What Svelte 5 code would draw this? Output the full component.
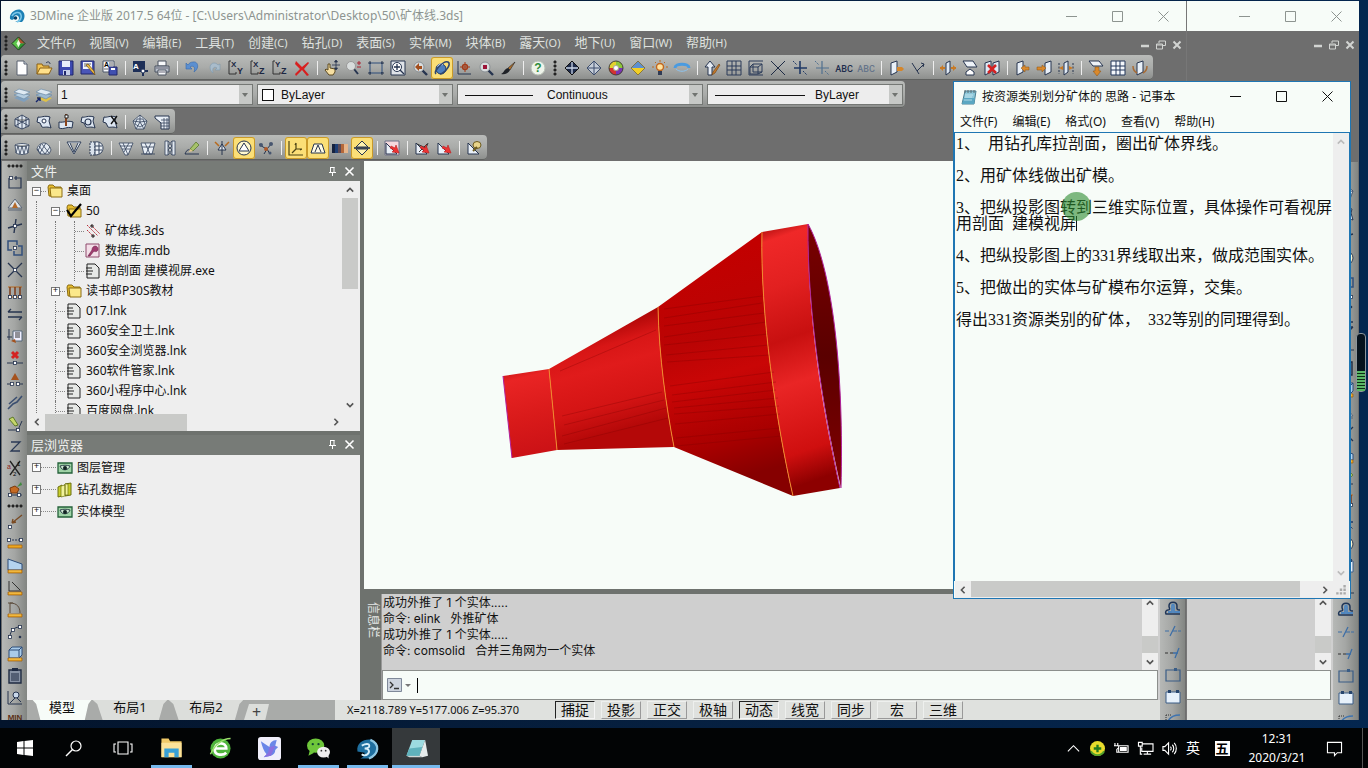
<script lang="ts">
  type Tool = { icon: string; label: string; on?: boolean };

  const N = "#26344f";
  const cloth = `<path d="M2 3c3 1 6-2 12 0l-1 4 2 7c-4-2-8 0-9-1L4 9 1 8z" fill="#dde6f1" stroke="${N}"/>`;
  const lens = `<path d="M10 10l5 5" stroke="${N}" stroke-width="2.4"/><circle cx="7" cy="7" r="5" fill="#d8dcdd" stroke="#8a9095"/>`;
  const tri = `<path d="M2 3v11h11z" fill="#e9f0f8" stroke="${N}"/>`;
  const arrow = `<path d="M7 6l4 2 1-3 3 8-7-1 2-2-4-2z" fill="#e33" stroke="#b22" stroke-width=".6"/>`;
  const ruler = `<path d="M1 12h14v3H1z" fill="#eca61f" stroke="#9b5d10" stroke-width=".7"/><path d="M3 12v2m2-2v2m2-2v2m2-2v2m2-2v2m2-2v2" stroke="#fbe08a" stroke-width=".6"/>`;
  const pane = `<path d="M3 3l6-2v11l-6 3z" fill="#e9f0f8" stroke="${N}"/>`;
  const dot = (x: number, y: number) => `<rect x="${x - 1.5}" y="${y - 1.5}" width="3" height="3" fill="#fff" stroke="${N}" stroke-width=".8"/>`;
  const xyz = (a: string, b: string) => `<path d="M1 1v13h7M1 1h2M8 14v-2" fill="none" stroke="#333"/><text x="3" y="7" font-size="8" font-weight="bold" font-family="Liberation Sans" fill="#1b2743">${a}</text><text x="9" y="14" font-size="9" font-weight="bold" font-family="Liberation Sans" fill="#1b2743">${b}</text>`;
  const abc = (c: string) => `<text x="8" y="12" text-anchor="middle" font-size="9" font-weight="500" font-family="Roboto" fill="${c}">ABC</text>`;

  const icons: Record<string, string> = {
    app: `<path d="M1 11C0 5 7 0 12 2c4 2 5 8 1 12H6c4-1 5-4 3-6s-5 0-4 3l-2 1z" fill="#1d80b4"/><path d="M3 8c2-4 8-5 9-1 1 3-1 6-4 7" fill="none" stroke="#7cc8ea" stroke-width="1.6"/><circle cx="6.5" cy="10" r="1.8" fill="#0b3f66"/>`,
    gem: `<path d="M8 1L1 8l7 7z" fill="#5cc64a"/><path d="M8 1l7 7H8z" fill="#b4532f"/><path d="M8 15l7-7H8z" fill="#2f9a33"/><path d="M8 4l2 4-2 4-2-4z" fill="#eaffdc"/><path d="M8 1l7 7-7 7-7-7z" fill="none" stroke="#163b14"/>`,
    new: `<path d="M3 1h7l3 3v11H3z" fill="#fff" stroke="#59616e"/><path d="M10 1v3h3" fill="#cfd8e4" stroke="#59616e"/>`,
    open: `<path d="M1 14V4h5l1 2h6v3" fill="#f3c453" stroke="#8a6116"/><path d="M1 14l3-6h12l-3 6z" fill="#ffe08a" stroke="#8a6116"/><path d="M10 3c2-2 4-1 4 1" fill="none" stroke="#26344f"/>`,
    save: `<path d="M1 1h14v14H1z" fill="#3d49b0" stroke="#20276b"/><path d="M4 1h8v6H4z" fill="#e8edfa"/><path d="M5 10h7v5H5z" fill="#c7cfe8"/><path d="M6 11h2v4H6z" fill="#20276b"/>`,
    saveas: `<path d="M1 1h13v13H1z" fill="#4a56b8" stroke="#20276b"/><path d="M3 2h9v7H3z" fill="#f2f4fb"/><path d="M4 4h7M4 6h6" stroke="#666"/><path d="M6 5l7 8 2 2-1-4-6-7z" fill="#f1be43" stroke="#6b4c12" stroke-width=".7"/>`,
    saveall: `<path d="M1 1h11v11H1z" fill="#f5f7fb" stroke="#4d5668"/><path d="M7 7h8v8H7z" fill="#4050b0" stroke="#20276b"/><path d="M9 8h4v2H9z" fill="#fff"/><text x="2" y="7" font-size="7" font-weight="bold" font-family="Liberation Sans">A</text><path d="M7 3h4M7 5h4M2 9h4" stroke="#666"/>`,
    cad: `<path d="M1 1h12v11H1z" fill="#1d2f57"/><text x="1" y="9" font-size="8" font-weight="bold" font-family="Liberation Sans" fill="#fff">A</text><path d="M7 11h9M11 6v10" stroke="#1d2f57" stroke-width="2"/><circle cx="11" cy="11" r="2" fill="#fff" stroke="#1d2f57"/>`,
    print: `<path d="M4 1h8v5H4z" fill="#f7f9fb" stroke="#4b5360"/><path d="M1 6h14v6H1z" fill="#b9c1cc" stroke="#4b5360"/><path d="M4 10h8v5H4z" fill="#f7f9fb" stroke="#4b5360"/><path d="M5 12h6M2 8h12" stroke="#667"/>`,
    undo: `<path d="M2 3v6h6L6 7c3-2 6 0 4 5 6-4 4-11-1-10C7 2 5 3 4 5z" fill="#5b8fd0" stroke="#3568ab" stroke-width=".6"/>`,
    redo: `<path d="M14 4v6H9l2-2C8 6 6 8 7 13 2 9 4 3 8 3c2 0 3 1 4 2z" fill="#a9bccb" stroke="#7e98ad" stroke-width=".6"/>`,
    xy: xyz("X", "Y"),
    xz: xyz("X", "Z"),
    yz: xyz("Y", "Z"),
    del: `<path d="M2 1l6 6 6-5 1 1-5 6 5 6-2 1-5-6-6 6-1-2 5-5-5-5z" fill="#d81f1f"/>`,
    hand: `<path d="M5 15l-4-5 1-1 2 1V4h2v4l5 1v3l-2 3z" fill="#f6dfa2" stroke="#5c4a22"/><path d="M12 1v8M8 5h8M12 0l-1.5 2h3zM12 10l-1.5-2h3z" stroke="${N}" stroke-width=".8" fill="${N}"/>`,
    zoom: `<path d="M8 9l4 5" stroke="${N}" stroke-width="2"/><circle cx="5" cy="6" r="4.5" fill="#d8dcdc" stroke="#999"/><path d="M11 3h4M13 1v4M11 7h4" stroke="#a23"/>`,
    extents: `<path d="M2 3h12v10H2z" fill="none" stroke="#2c4d7a"/><path d="M0 3h3M2 1v3M13 3h3M14 1v3M0 13h3M2 12v3M13 13h3M14 12v3" stroke="${N}"/>`,
    zoomin: `<path d="M1 1h14v14H1z" fill="#dfe3e8" stroke="${N}"/><circle cx="7" cy="7" r="4.5" fill="#fff" stroke="${N}"/><path d="M7 4v6M4 7h6M10 10l4 4" stroke="${N}" stroke-width="1.3"/>`,
    zoomprev: lens + `<path d="M3 7l4-4v3h3v3H7v2z" fill="#a34e1d"/>`,
    orbit: `<circle cx="7" cy="9" r="5" fill="#4f7fbd" stroke="#21395f"/><path d="M4 7c1-2 3-3 5-3" stroke="#dbe9f7" stroke-width="2" fill="none"/><path d="M2 14C-1 11 10 0 14 2s-3 11-8 12" fill="none" stroke="#2f4770" stroke-width="1.6"/>`,
    target: `<path d="M2 1v13h13" fill="none" stroke="${N}"/><circle cx="9" cy="7" r="2.5" fill="none" stroke="#a43b17" stroke-width="1.4"/><path d="M9 2v10M4 7h10" stroke="#a43b17"/>`,
    zoomwin: lens + `<path d="M5 5h4v4H5z" fill="#9c1438"/>`,
    brush: `<path d="M15 2L8 8l2 2z" fill="#b6722b" stroke="#222" stroke-width=".6"/><path d="M8 8l2 2c-2 4-6 5-9 4 3-1 3-5 7-6z" fill="#1f2227"/>`,
    help: `<circle cx="8" cy="8" r="7" fill="#eef4ea" stroke="#b5beb3"/><text x="8" y="12" text-anchor="middle" font-size="12" font-weight="bold" font-family="Liberation Sans" fill="#2a8b3c">?</text>`,
    dia1: `<path d="M8 1l7 7-7 7-7-7z" fill="#1e2b4a" stroke="#111"/><path d="M8 2v12M2 8h12" stroke="#c9d5e6" stroke-width="1.3"/>`,
    dia2: `<path d="M8 1l7 7-7 7-7-7zM8 1v14M1 8h14" fill="#c5cdd8" stroke="#3c4d6c"/>`,
    wheel: `<circle cx="8" cy="8" r="5" fill="none" stroke="#e2d32c" stroke-width="4"/><path d="M8 3a5 5 0 0 1 5 5" fill="none" stroke="#8cc63a" stroke-width="4"/><path d="M13 8a5 5 0 0 1-5 5" fill="none" stroke="#7a35b4" stroke-width="4"/><path d="M8 13a5 5 0 0 1-5-5" fill="none" stroke="#d43232" stroke-width="4"/><circle cx="8" cy="8" r="2" fill="#fff"/><circle cx="8" cy="8" r="7" fill="none" stroke="#333" stroke-width=".9"/>`,
    dia3: `<path d="M8 1l7 7H1z" fill="#5d8fcf"/><path d="M1 8h14l-7 7z" fill="#f2cf26"/><path d="M8 1l7 7-7 7-7-7z" fill="none" stroke="#7c6a2c" stroke-width=".8"/>`,
    bulb: `<circle cx="8" cy="7" r="3.5" fill="#ffe3a0" stroke="#c2661d" stroke-width="1.4"/><path d="M6 11h4v4H6z" fill="#2f3b55"/><path d="M8 0v2M2 7H0M16 7h-2M3 2l1 1M13 2l-1 1" stroke="#b96a20"/>`,
    arc: `<path d="M1 8c0-5 14-5 14 0" fill="none" stroke="#4a9be0" stroke-width="3"/><path d="M2 9c3 3 9 3 12 0" fill="none" stroke="#8cc3ef"/>`,
    tree: `<path d="M6 1l5 6H8v8H4V7H1z" fill="#e6ecf4" stroke="${N}"/><path d="M15 4l-6 8-1 3 3-2 5-8z" fill="#c77a2a" stroke="#6b3f10" stroke-width=".6"/>`,
    grid4: `<path d="M1 1h14v14H1zM1 6h14M1 10h14M6 1v14M10 1v14" fill="none" stroke="#2a3b58"/>`,
    cube: `<path d="M1 1v14h14M1 1h14M5 4h9v8H5zM2 7h8v7H2zM2 7l3-3M10 7l4-3M10 14l4-2" fill="none" stroke="#2a3b58"/>`,
    cross: `<path d="M1 1l14 14M15 1L1 15" stroke="#1f2c45"/>`,
    star: `<path d="M8 1v13M2 8h13" stroke="#213a66" stroke-width="1.6"/><path d="M1 1l4 4M11 11l4 4" stroke="#213a66" stroke-dasharray="2 1"/>`,
    star2: `<path d="M8 1v13M2 8h13" stroke="#50708f" stroke-width="1.2"/><path d="M1 1l4 4M11 11l4 4" stroke="#50708f" stroke-dasharray="2 1"/>`,
    abc: abc("#1c2c4c"),
    abc2: abc("#66758a"),
    door: pane + `<path d="M9 7h5l2 2-2 2H9z" fill="#d5862a"/>`,
    angle: `<path d="M2 3l7 11M7 11l7-7M11 3l3 1-1 3" fill="none" stroke="${N}"/>`,
    slice: `<path d="M6 3l4-2v11l-4 3z" fill="#dfe9f4" stroke="${N}"/><path d="M0 8h5M11 8h5" stroke="#c97a24" stroke-width="2"/><path d="M0 8l3-3v6zM16 8l-3-3v6z" fill="#c97a24"/>`,
    roof: `<path d="M1 1h10l4 6H5z" fill="#eef3f8" stroke="${N}"/><path d="M4 15v-3l4-3 4 3v3z" fill="#fff" stroke="${N}"/>`,
    nodoor: `<path d="M1 3l6-2v11l-6 3zM9 3l6-2v11l-6 3z" fill="#dfe9f4" stroke="${N}"/><path d="M4 5l8 8M12 5l-8 8" stroke="#d42222" stroke-width="2.5"/>`,
    dooro: pane + `<path d="M7 8l4-3v2h4v3h-4v2z" fill="#d9892d" stroke="#8b5113" stroke-width=".5"/>`,
    doori: `<path d="M9 3l6-2v11l-6 3z" fill="#e9f0f8" stroke="${N}"/><path d="M10 8L6 5v2H1v3h5v2z" fill="#d9892d" stroke="#8b5113" stroke-width=".5"/>`,
    doorx: `<path d="M6 3l4-2v11l-4 3z" fill="#dfe9f4" stroke="${N}"/><path d="M1 3v11M15 3v11" stroke="${N}" stroke-dasharray="2 1.5"/><path d="M1 8l4-2v4zM15 8l-4-2v4z" fill="#c97a24"/>`,
    funnel: `<path d="M1 1h10l4 5H5z" fill="#eef3f8" stroke="${N}"/><path d="M7 7h4v4h2l-4 5-4-5h2z" fill="#d9892d" stroke="#8b5113" stroke-width=".5"/>`,
    table: `<path d="M1 1h14v14H1zM1 6h14M1 10h14M6 1v14M10 1v14" fill="#f4f7fb" stroke="#22365a"/>`,
    rotate: `<path d="M5 3l6-2v11l-6 3z" fill="#e9f0f8" stroke="${N}"/><path d="M1 6c0 4 2 6 4 7M15 6c0 4-2 6-4 7" fill="none" stroke="#a76b35" stroke-width="1.5"/>`,
    layers: `<path d="M0 11l5-2 11 2-6 4z" fill="#7f9fbd"/><path d="M0 8l5-2 11 2-6 4z" fill="#b5cde0" stroke="#6f8ca8" stroke-width=".7"/><path d="M0 5l5-3 11 3-6 3z" fill="#dfeaf3" stroke="#6f8ca8" stroke-width=".7"/>`,
    layers2: `<path d="M0 11l5-2 11 2-6 4z" fill="#e0c247"/><path d="M0 8l5-2 11 2-6 4z" fill="#9dbbd4" stroke="#6f8ca8" stroke-width=".7"/><path d="M0 5l5-3 11 3-6 3z" fill="#dfeaf3" stroke="#6f8ca8" stroke-width=".7"/><path d="M0 15l4-4M1 11h3v3" fill="none" stroke="#13246b" stroke-width="1.4"/>`,
    mesh1: `<path d="M8 1l7 4v7l-7 3-7-3V5zM8 1v7M1 5l7 3 7-3M8 8l-7 4M8 8l7 4M8 8v7M4 3v10M12 3v10" fill="#dfe7f0" stroke="#33425c" stroke-width=".9"/>`,
    mesh2: cloth + `<circle cx="8" cy="7" r="2" fill="#fff" stroke="${N}"/>`,
    mesh3: `<path d="M1 8c5 1 8-2 14 0l-1 6c-5-2-8 2-13 0z" fill="#dde6f1" stroke="${N}"/><path d="M8 0v12" stroke="#8a431a" stroke-width="2"/><path d="M7 1h3v3H7z" fill="#fff" stroke="#222"/>`,
    mesh4: cloth + `<circle cx="8" cy="8" r="3" fill="#dde6f1" stroke="${N}" stroke-width="1.2"/>`,
    mesh5: cloth + `<path d="M9 2l6 8M15 2l-6 8" stroke="#111" stroke-width="1.3"/>`,
    mesh6: `<path d="M8 1l7 6-3 8H4L1 7zM8 1v7M1 7l7 1 7-1M4 15l4-7 4 7M5 5h6l2 5-5 3-5-3z" fill="#dfe7f0" stroke="#33425c" stroke-width=".8"/>`,
    mesh7: `<path d="M1 2h14v13H7V9L1 4z" fill="#e9eff6" stroke="${N}"/><path d="M7 6h8M7 9h8M7 12h8M10 4v11M13 4v11" stroke="#33425c" stroke-width=".8"/>`,
    solid1: `<path d="M1 5c4-2 10-2 14 0l-1 8c-4 2-8 2-12 0zM1 5c4 2 10 2 14 0M2 13l2-7 2 8 2-8 2 8 2-8 2 7" fill="#e4ebf3" stroke="#33425c" stroke-width=".8"/>`,
    solid2: `<path d="M1 9c1-4 4-6 7-6s6 3 7 7l-2 4H4zM3 6l6 8M6 4l7 9M1 9l4 5M10 3l-6 10M14 7l-5 7M5 4l-3 7" fill="#e4ebf3" stroke="#33425c" stroke-width=".8"/>`,
    tri1: `<path d="M1 2h14L8 14zM4 3l4 9 4-9" fill="#eef3f8" stroke="#33425c"/>`,
    solid3: `<path d="M2 2h5v13H2z" fill="#d9e2ec" stroke="${N}" stroke-dasharray="2 1"/><path d="M7 2c5-1 8 2 8 6s-3 7-8 7zM7 6h7M7 10h7M11 2v12" fill="#eef3f8" stroke="#33425c"/>`,
    cone1: `<path d="M1 3h14l-5 12H7zM2 6h12M4 9h8M5 3l5 12M11 3L6 12" fill="#e9eff6" stroke="#33425c" stroke-width=".8"/>`,
    cone2: `<path d="M1 3h14l-3 11H4zM1 14h14M2 7h12M5 3l5 11M11 3L6 14" fill="#e9eff6" stroke="#33425c" stroke-width=".8"/>`,
    net: `<path d="M3 1h3v14H3zM10 1h3v14h-3zM6 1l4 5-4 4 4 5M10 1L6 6l4 4-4 5" fill="#e1e8f0" stroke="#33425c" stroke-width=".8"/>`,
    pencil: `<path d="M1 14h14M1 14c2-5 4-5 6-3" stroke="${N}" fill="none"/><path d="M6 9l6-7 3 3-6 6z" fill="#a6c26a" stroke="#4f6d22" stroke-width=".7"/><path d="M6 9l-1 3 4-1z" fill="#e8c98a"/>`,
    peak: `<path d="M8 1v14M4 10l4-6 4 6z" fill="#e9eff6" stroke="${N}"/><path d="M1 2l4 4M15 2l-4 4" stroke="#b8691c" stroke-width="1.5"/>`,
    circ: `<circle cx="8" cy="8" r="7" fill="#fff8cf" stroke="${N}"/><path d="M8 3l5 8H3z" fill="#fff" stroke="${N}"/>`,
    pts: `<path d="M1 4l4 3 4 2 3 5M6 14l3-5 5-6" stroke="${N}" fill="none"/><circle cx="3" cy="5" r="2" fill="#47566f"/><circle cx="8" cy="9" r="2" fill="#b05a2a"/><circle cx="13" cy="4" r="2" fill="#47566f"/><circle cx="12" cy="13" r="1.5" fill="#47566f"/>`,
    axes: `<path d="M1 1v14h14M4 13l4-4M8 3v6h6M8 3l-1 2M14 9l-2 1" fill="none" stroke="#4d4415" stroke-width="1.2"/>`,
    trap: `<path d="M4 4h8l3 9H1zM5 12l3-7 3 7" fill="#fffbe4" stroke="${N}"/>`,
    grad: `<path d="M0 4h3v9H0z" fill="#16223f"/><path d="M3 4h3v9H3z" fill="#1f3f75"/><path d="M6 4h3v9H6z" fill="#5c4a55"/><path d="M9 4h3v9H9z" fill="#b4683a"/><path d="M12 4h4v9h-4z" fill="#e6b58b"/>`,
    dia4: `<path d="M8 1l6 6H2zM8 15l6-6H2z" fill="#fff3b0" stroke="${N}"/><path d="M0 8h16" stroke="${N}" stroke-width="1.6"/>`,
    cut1: `<path d="M1 1h14v14H1z" fill="#f5d9dd" stroke="#6c7388"/>${tri}${arrow}`,
    cut2: tri + `<path d="M3 4l9 4 2-5M5 12l8-8" stroke="#333" fill="none"/>` + arrow,
    cut3: tri + arrow,
    cut4: tri + `<ellipse cx="11" cy="5" rx="4" ry="3.5" fill="#e8d48a" stroke="#6c5a1e"/><path d="M7 11l4-4" stroke="#6c5a1e" stroke-width="2"/>`,
    e1: `<path d="M2 4h2M7 4h7v10H2V4M9 2v4" fill="none" stroke="${N}" stroke-width="1.2"/>${dot(4, 4)}`,
    e2: `<path d="M8 3l7 9H1zM1 14h14" fill="#dfe4e8" stroke="#5c6676"/><path d="M8 6l3 6H5z" fill="#b36a2b"/>`,
    e3: `<path d="M1 10l14-4M9 1L7 15" stroke="${N}" stroke-width="1.4"/>${dot(8, 8)}`,
    e4: `<path d="M10 5V1H1v9h4M11 6h4v9H7v-4" fill="none" stroke="#33507c" stroke-width="1.5"/>${dot(8, 8)}`,
    e5: `<path d="M1 1l14 14M15 1L1 15" stroke="${N}" stroke-width="1.3"/>${dot(8, 8)}`,
    e6: `<path d="M1 3h14M1 13h14" stroke="#b8691c"/><path d="M3 3v10M8 3v10M13 3v10" stroke="#7c3b18" stroke-width="1.5"/>${dot(3, 13)}${dot(8, 13)}${dot(13, 13)}`,
    e7: `<path d="M1 6h14M4 3L1 6M15 11H1M12 14l3-3" stroke="${N}" stroke-width="1.3" fill="none"/>`,
    e8: `<path d="M2 1v11M0 9h5" stroke="${N}"/><path d="M6 3h9v10H6z" fill="#eef" stroke="#567"/><path d="M8 5h5M8 7h5M8 9h5" stroke="#333"/><path d="M4 13l4-2 1 4z" fill="#a5521d"/>`,
    e9: `<path d="M5 2l6 6M11 2L5 8" stroke="#d42222" stroke-width="3"/><path d="M0 13h16" stroke="${N}"/>${dot(8, 13)}`,
    e10: `<path d="M8 1l4 7H4z" fill="#a5521d"/><path d="M0 12h5M11 12h5" stroke="${N}"/>${dot(5, 12)}${dot(11, 12)}`,
    e11: `<path d="M1 15l5-5 4-2 5-6M2 10l8-7" stroke="#3b4f70" fill="none" stroke-width="1.6"/>`,
    e12: `<path d="M2 3l6 7 3-1-5-8z" fill="#c6d66b" stroke="#5d7a2a"/><path d="M1 14h10l4-9" fill="none" stroke="${N}"/>${dot(11, 14)}`,
    e13: `<path d="M4 4h9L4 13h9" fill="none" stroke="#2b3a56" stroke-width="1.3"/>`,
    e14: `<path d="M3 1l10 14M13 1L3 15" stroke="#222" stroke-width="1.3"/><text x="0" y="9" font-size="7" font-family="Liberation Sans" fill="#8e1d1d">a</text><text x="10" y="6" font-size="6" font-family="Liberation Sans">1</text><text x="6" y="16" font-size="6" font-family="Liberation Sans">2</text>`,
    e15: `<path d="M3 6l5-2 4 3-2 4H4z" fill="#c66a22" stroke="#7b3a0e"/><path d="M10 5l4-5 1 3z" fill="#3f8a3e"/><path d="M1 13h14" stroke="${N}"/>${dot(3, 13)}${dot(12, 13)}`,
    m1: `<path d="M15 1L5 9M5 9l1-4M5 9l4-1" stroke="#7a4a22" stroke-width="1.3"/>${dot(3, 13)}`,
    m2: `<path d="M2 4h12" stroke="${N}" stroke-dasharray="2 1"/>${dot(2, 4)}${dot(14, 4)}<path d="M1 9h14v3H1z" fill="#eca61f" stroke="#9b5d10" stroke-width=".7"/>`,
    m3: `<path d="M1 1l14 5v6H1z" fill="#b4d3ef" stroke="#2d4d78"/>` + ruler,
    m4: `<path d="M2 1v10h12M5 2l8 8" fill="none" stroke="#333"/>` + ruler,
    m5: `<path d="M3 11V1c7 0 10 4 10 10M1 1h5" fill="none" stroke="#5b4a3a"/>` + ruler,
    m6: `<path d="M3 13C3 7 7 3 13 3" fill="none" stroke="${N}"/>${dot(3, 13)}${dot(6, 6)}${dot(13, 3)}<circle cx="13" cy="13" r="1.3" fill="${N}"/>`,
    m7: `<path d="M2 4l3-3h10v8l-3 3H2z" fill="#a9cbe9" stroke="#2d4d78"/><path d="M2 4h10v7M12 4l3-3" fill="none" stroke="#2d4d78"/>` + ruler,
    m8: `<path d="M2 2h12v13H2z" fill="#8893a5" stroke="#1f2b42" stroke-width="1.4"/><path d="M4 6h8M4 8h8M4 10h8M4 12h8" stroke="#1f2b42"/><path d="M5 0h6v3H5z" fill="#1f2b42"/>`,
    m9: `<path d="M1 1v13h14M3 13l6-6 5 5" fill="none" stroke="${N}"/><circle cx="9" cy="5" r="3" fill="#c9d8ea" stroke="${N}"/>`,
    m10: `<text x="8" y="8" text-anchor="middle" font-size="8" font-weight="bold" font-family="Liberation Sans" fill="#5a2f16">MIN</text>`,
    r1: `<path d="M15 13H1c-1-2 0-4 2-4 3 0 1-2 1-4 0-5 8-5 8 0 0 2-1 4 3 4" fill="none" stroke="#1e3457" stroke-width="1.5"/><path d="M3 11h4V5c0-2 2-2 2 0v6h6" fill="none" stroke="#4f86bf" stroke-width="1.8"/>`,
    r2: `<path d="M0 8h5M8 8h8" stroke="#3c6ea6" stroke-dasharray="4 1"/><path d="M5 13L10 3" stroke="#3c6ea6" stroke-width="1.3"/>`,
    r3: `<path d="M0 8h9" stroke="#333" stroke-dasharray="3 2"/><path d="M8 8h5M10 13l4-10" stroke="#3c6ea6" stroke-width="1.3"/>`,
    r4: `<path d="M9 3H1v11h14V3h-3" fill="none" stroke="#3a5d86" stroke-width="1.2"/><path d="M9 1h3v3H9z" fill="#3a5d86"/>`,
    r5: `<path d="M1 3h14v11H1z" fill="#e7f1fb" stroke="#3a5d86"/><path d="M3 1h3v3H3zM11 1h3v3h-3z" fill="#26456e"/>`,
    r6: `<path d="M1 4h5M1 4v11" stroke="#333" stroke-dasharray="1 1"/><path d="M2 14C3 7 7 4 15 4" fill="none" stroke="#3f74b0" stroke-width="1.5"/>`,
    folder: `<path d="M1 4l1-2h4l2 2h6v9H2z" fill="#e7bd2e" stroke="#8b6c12"/><path d="M3 5h12v9H4z" fill="#fbe88a" stroke="#8b6c12"/>`,
    checked: `<path d="M1 4l1-2h4l2 2h6v9H2z" fill="#e7bd2e" stroke="#8b6c12"/><path d="M3 6h12v8H4z" fill="#f5da5d" stroke="#8b6c12"/><path d="M1 7l4 6L15 1" fill="none" stroke="#000" stroke-width="2.2"/>`,
    lines: `<path d="M2 2l11 11M6 2l9 9M2 7l7 7" stroke="#b8303a" stroke-dasharray="2 1"/><path d="M7 1v4M5 3h4M8 11v4M6 13h4" stroke="#222"/>`,
    mdb: `<path d="M1 1h13v13H1z" fill="#f3dfe8" stroke="#8f4a6d"/><path d="M3 13l4-6c0-5 6-5 6-1 0 3-3 3-4 2l-4 5z" fill="#a03c70" stroke="#702448" stroke-width=".6"/>`,
    doc: `<path d="M2 1h8l4 4v10H2z" fill="#e6e8e6" stroke="#222"/><path d="M1 5h6M1 8h7M1 11h6" stroke="#222"/>`,
    eye: `<path d="M1 3h14v10H1z" fill="#9fd3a6" stroke="#24613a" stroke-width="1.3"/><path d="M3 6c3-1 7-1 10 0-1 4-8 6-10 0z" fill="#cfe9d4" stroke="#123" stroke-width=".8"/><circle cx="8" cy="8" r="2" fill="#122"/>`,
    holes: `<path d="M1 5l4-2v11l-4 1zM8 2l6-1v12l-6 1z" fill="#c9cf2a" stroke="#6c7010"/><path d="M4 4l4-1v11l-4 1zM8 2h3v11H8z" fill="#f1f39a" stroke="#6c7010" stroke-width=".7"/>`,
    pad: `<path d="M4 2h11l-2 13H1z" fill="#8cc7d9" stroke="#4b7f92"/><path d="M3 9h11l-1 6H1z" fill="#5aa7c2"/><path d="M4 1v3M7 1v3M10 1v3M13 1v3" stroke="#5b6a70"/><path d="M4 6h8M4 8h7M3 11h8" stroke="#d9f1f7" stroke-width=".7"/>`,
    winlogo: `<path d="M0 2l6.500-1v6.500H0zM7.500 1L16 0v7.500H7.500zM0 8.500h6.500V15L0 14zM7.500 8.500H16V16l-8.500-1z" fill="#fff"/>`,
    search: `<circle cx="10" cy="6" r="5" fill="none" stroke="#fff" stroke-width="1.2"/><path d="M6.5 9.5L0 16" stroke="#fff" stroke-width="1.4"/>`,
    taskview: `<path d="M3 2h10v12H3z" fill="none" stroke="#fff" stroke-width="1.1"/><path d="M1 4h-2v8h2M15 4h2v8h-2" fill="none" stroke="#fff" stroke-width="1.1"/>`,
    explorer: `<path d="M1 1h5l1 2h8v11H1z" fill="#f0c968"/><path d="M1 4h14v10H1z" fill="#fbe29a"/><path d="M3 14V8h10v6h-3v-3H6v3z" fill="#37a0d6"/>`,
    ie360: `<circle cx="8" cy="8" r="7" fill="#4fb53c"/><path d="M4 8h8c0-5-8-5-8 1 0 4 6 4 8 2" fill="none" stroke="#fff" stroke-width="1.9"/><path d="M1 12C4 5 10 1 15 1" fill="none" stroke="#9be06c"/>`,
    bird: `<rect width="16" height="16" rx="2" fill="#f0effb"/><path d="M2 3l6 4c0-3 2-5 5-5l-1 4 2 1-2 2c0 2-1 3-3 4l-5 1 2-2C4 10 3 7 2 3z" fill="#6a86e8"/><path d="M8 7l4-1-3 7-5 1 3-3z" fill="#8a6fe0"/>`,
    wechat: `<ellipse cx="6" cy="6" rx="6" ry="5" fill="#6ec63a"/><path d="M2 9l-1 4 4-2z" fill="#6ec63a"/><circle cx="4" cy="5" r=".8" fill="#143"/><circle cx="8" cy="5" r=".8" fill="#143"/><ellipse cx="11.5" cy="10.5" rx="4.5" ry="3.8" fill="#eee"/><path d="M13 13l2 2v-3z" fill="#eee"/><circle cx="10" cy="9.5" r=".6" fill="#333"/><circle cx="13" cy="9.5" r=".6" fill="#333"/>`,
    mine: `<path d="M1 10C0 4 6 1 11 2c6 2 6 10-1 13H3c2-1 3-2 3-4z" fill="#1f6f9f"/><path d="M10 2c7 3 6 10-1 13" fill="none" stroke="#8fc7e2" stroke-width="1.6"/><path d="M4 6c4-2 6-1 5 1-1 1-2 1-3 1 3 0 4 2 2 4-1 1-3 1-4 0" fill="none" stroke="#d8eff9" stroke-width="1.3"/>`,
    note: `<path d="M5 2h9l-4 11H1z" fill="#9ddbe0"/><path d="M14 2l2 11-4 1-2-1z" fill="#e6ecec"/><path d="M1 13h9l2 1H3z" fill="#cfd8d6"/><path d="M3 8l9-1-2 6H1z" fill="#5fb2bc"/>`,
  };

  const t = (s: string): (Tool | null)[] =>
    s.split(" ").map((w) => (w === "|" ? null : { icon: w.replace("*", ""), label: w.replace("*", ""), on: w.endsWith("*") }));

  const bar1a = t("new open save saveas saveall | cad print | undo redo xy xz yz del | hand zoom extents zoomin zoomprev orbit* target zoomwin brush | help");
  const bar1b = t("dia1 dia2 wheel dia3 bulb arc | tree grid4 cube cross star star2 abc abc2 | door angle | slice roof nodoor | dooro doori doorx | funnel table rotate");
  const bar3 = t("mesh1 mesh2 mesh3 mesh4 mesh5 | mesh6 mesh7");
  const bar4 = t("solid1 solid2 | tri1 solid3 | cone1 cone2 net pencil | peak circ* pts | axes* trap* grad dia4* | cut1 | cut2 cut3 | cut4");
  const railA = t("e1 e2 e3 e4 e5 e6 e7 e8 e9 e10 e11 e12 e13 e14 e15");
  const railB = t("m1 m2 m3 m4 m5 m6 m7 m8 m9 m10");
  const railR = t("mesh6 mesh2 e3 circ e4 m6 e7 e10 m8 m7 e2 e5 m3 pencil e6 star circ r5 e9 r1 r2 r3 r4 r5 r6");

  const menus = ["文件F", "视图V", "编辑E", "工具T", "创建C", "钻孔D", "表面S", "实体M", "块体B", "露天O", "地下U", "窗口W", "帮助H"];
  const padMenus = ["文件(F)", "编辑(E)", "格式(O)", "查看(V)", "帮助(H)"];

  const files = [
    { level: 0, icon: "folder", name: "桌面", box: "−" },
    { level: 1, icon: "checked", name: "50", box: "−" },
    { level: 2, icon: "lines", name: "矿体线.3ds" },
    { level: 2, icon: "mdb", name: "数据库.mdb" },
    { level: 2, icon: "doc", name: "用剖面 建模视屏.exe" },
    { level: 1, icon: "folder", name: "读书郎P30S教材", box: "+" },
    { level: 1, icon: "doc", name: "017.lnk" },
    { level: 1, icon: "doc", name: "360安全卫士.lnk" },
    { level: 1, icon: "doc", name: "360安全浏览器.lnk" },
    { level: 1, icon: "doc", name: "360软件管家.lnk" },
    { level: 1, icon: "doc", name: "360小程序中心.lnk" },
    { level: 1, icon: "doc", name: "百度网盘.lnk" },
  ];
  const layers = [
    { icon: "eye", name: "图层管理" },
    { icon: "holes", name: "钻孔数据库" },
    { icon: "eye", name: "实体模型" },
  ];
  const log = ["成功外推了 1 个实体.....", "命令: elink   外推矿体", "成功外推了 1 个实体.....", "命令: comsolid   合并三角网为一个实体"];
  const tabs = ["模型", "布局1", "布局2"];

  let modes = $state([
    { name: "捕捉", on: true },
    { name: "投影", on: false },
    { name: "正交", on: false },
    { name: "极轴", on: false },
    { name: "动态", on: true },
    { name: "线宽", on: false },
    { name: "同步", on: false },
    { name: "宏", on: false },
    { name: "三维", on: false },
  ]);
  let note = $state(
    "1、  用钻孔库拉剖面，圈出矿体界线。\n\n2、用矿体线做出矿模。\n\n3、把纵投影图转到三维实际位置，具体操作可看视屏\n用剖面  建模视屏\n\n4、把纵投影图上的331界线取出来，做成范围实体。\n\n5、把做出的实体与矿模布尔运算，交集。\n\n得出331资源类别的矿体，  332等别的同理得到。"
  );
  let command = $state("");

  const apps = [
    { icon: "winlogo", label: "开始" },
    { icon: "search", label: "搜索" },
    { icon: "taskview", label: "任务视图" },
    { icon: "explorer", label: "文件资源管理器", open: true, big: true },
    { icon: "ie360", label: "浏览器", big: true },
    { icon: "bird", label: "迅雷", big: true },
    { icon: "wechat", label: "微信", open: true, big: true },
    { icon: "mine", label: "3DMine", open: true, big: true },
    { icon: "note", label: "记事本", open: true, active: true, big: true },
  ];
  // shading streaks on the two tapered sections: x1, y1, x2, y2
  const streaks = [
    [664, 309, 762, 296], [664, 318, 762, 303], [664, 326, 764, 313], [664, 337, 766, 322], [664, 345, 768, 334],
    [666, 355, 769, 345], [667, 362, 770, 355], [670, 386, 774, 372], [672, 395, 776, 382], [672, 402, 776, 390],
    [674, 408, 778, 398], [674, 414, 779, 406], [675, 424, 780, 414], [676, 446, 782, 436], [676, 438, 780, 428],
    [560, 371, 656, 330], [562, 416, 662, 392], [564, 425, 664, 400], [562, 436, 666, 408], [564, 444, 668, 418],
  ];
</script>

{#snippet icon(name: string)}
  <svg class="ico" viewBox="0 0 16 16" aria-hidden="true">{@html icons[name]}</svg>
{/snippet}

{#snippet tools(list: (Tool | null)[])}
  {#each list as tool}
    {#if tool}
      <button class="tool" class:on={tool.on} aria-label={tool.label}>{@render icon(tool.icon)}</button>
    {:else}
      <span class="sep"></span>
    {/if}
  {/each}
{/snippet}

{#snippet chevron(d: string)}
  <svg class="chev" viewBox="0 0 10 10" aria-hidden="true"><path {d} fill="none" stroke="currentColor" stroke-width="2" /></svg>
{/snippet}

{#snippet vscroll(cls: string)}
  <div class="vscroll {cls}">
    <button aria-label="向上滚动">{@render chevron("M1 7l4-4 4 4")}</button>
    <div class="track"><div class="thumb"></div></div>
    <button aria-label="向下滚动">{@render chevron("M1 3l4 4 4-4")}</button>
  </div>
{/snippet}

{#snippet hscroll(cls: string)}
  <div class="hscroll {cls}">
    <button aria-label="向左滚动">{@render chevron("M7 1L3 5l4 4")}</button>
    <div class="track"><div class="thumb"></div></div>
    <button aria-label="向右滚动">{@render chevron("M3 1l4 4-4 4")}</button>
  </div>
{/snippet}

{#snippet winButtons()}
  <div class="winbtns">
    <button aria-label="最小化"><svg viewBox="0 0 11 11"><path d="M0 5.5h11" /></svg></button>
    <button aria-label="最大化"><svg viewBox="0 0 11 11"><path d="M.5.5h10v10H.5z" /></svg></button>
    <button aria-label="关闭"><svg viewBox="0 0 11 11"><path d="M.5.5l10 10M10.5.5l-10 10" /></svg></button>
  </div>
{/snippet}

{#snippet mdiButtons()}
  <div class="mdi">
    <button aria-label="最小化窗口"><svg viewBox="0 0 10 10"><path d="M1 6h8" stroke-width="2.5" /></svg></button>
    <button aria-label="还原窗口"><svg viewBox="0 0 10 10"><path d="M3 3V1h6.5v4.5H7M.5 4h6v5h-6zM.5 5h6" /></svg></button>
    <button aria-label="关闭窗口"><svg viewBox="0 0 10 10"><path d="M1.5 1.5l7 7M8.5 1.5l-7 7" stroke-width="2" /></svg></button>
  </div>
{/snippet}

{#snippet rail()}
  <div class="rail right">{@render tools(railR)}</div>
{/snippet}

{#snippet panelHead(name: string)}
  <header class="panel-head">
    <h2>{name}</h2>
    <button aria-label="固定"><svg viewBox="0 0 9 9"><path d="M2.5 0v5M2.5.5h4M6 0v5M1 5.5h7M4.5 5v4" /></svg></button>
    <button aria-label="关闭面板"><svg viewBox="0 0 9 9"><path d="M.5.5l8 8M8.5.5l-8 8" stroke-width="1.6" /></svg></button>
  </header>
{/snippet}

<div class="screen">
  <main class="desktop">
    <section class="window back" aria-label="3DMine">
      <div class="titlebar">{@render winButtons()}</div>
      <div class="menubar">{@render mdiButtons()}</div>
      <div class="void"></div>
      <div class="frame">
        <div class="middle">
          <div class="canvas"></div>
          <div class="console">
            <div class="conbox">
              <div class="logrow"><div class="log"></div>{@render vscroll("con")}</div>
              <div class="cmd"></div>
            </div>
          </div>
          <div class="status"></div>
        </div>
        {@render rail()}
      </div>
    </section>

    <section class="window front" aria-label="3DMine 企业版">
      <div class="titlebar">
        {@render icon("app")}
        <h1>3DMine 企业版 2017.5 64位 - [C:\Users\Administrator\Desktop\50\矿体线.3ds]</h1>
        {@render winButtons()}
      </div>
      <nav class="menubar">
        <span class="grip"></span>
        {@render icon("gem")}
        <div class="menus">
          {#each menus as m}
            <button>{m.slice(0, 2)}<small>({m.slice(2)})</small></button>
          {/each}
        </div>
        {@render mdiButtons()}
      </nav>
      <div class="bars">
        <div class="bar">
          <span class="grip"></span>{@render tools(bar1a)}<span class="grip"></span>{@render tools(bar1b)}
        </div>
        <div class="bar tall">
          <span class="grip"></span>{@render tools(t("layers layers2"))}
          <div class="combos">
            <div class="combo"><select aria-label="图层"><option>1</option></select></div>
            <div class="combo swatch"><i></i><select aria-label="颜色"><option>ByLayer</option></select></div>
            <div class="combo wide"><i></i><select aria-label="线型"><option>Continuous</option></select></div>
            <div class="combo weight"><i></i><select aria-label="线宽"><option>ByLayer</option></select></div>
          </div>
        </div>
        <div class="bar"><span class="grip"></span>{@render tools(bar3)}</div>
        <div class="bar"><span class="grip"></span>{@render tools(bar4)}</div>
      </div>

      <div class="frame">
        <div class="rail">
          <span class="grip flat"></span>{@render tools(railA)}<span class="grip flat"></span>{@render tools(railB)}
        </div>
        <div class="middle">
          <div class="work">
            <aside class="dock">
              <section class="panel">
                {@render panelHead("文件")}
                <div class="filebox">
                  <div class="filerow">
                    <ul class="tree">
                      {#each files as f}
                        <li>
                          {#each Array(f.level) as _}<span class="guide"></span>{/each}
                          {#if f.box}
                            <button class="box" aria-label={f.name}>{f.box}</button>
                          {:else}
                            <span class="elbow"></span>
                          {/if}
                          <span class="dots"></span>
                          {@render icon(f.icon)}
                          <span class="name">{f.name}</span>
                        </li>
                      {/each}
                    </ul>
                    {@render vscroll("files")}
                  </div>
                  {@render hscroll("files")}
                </div>
              </section>
              <section class="panel">
                {@render panelHead("层浏览器")}
                <ul class="tree loose">
                  {#each layers as l}
                    <li>
                      <button class="box" aria-label={l.name}>+</button>
                      <span class="dots long"></span>
                      {@render icon(l.icon)}
                      <span class="name">{l.name}</span>
                    </li>
                  {/each}
                </ul>
              </section>
            </aside>
            <div class="center">
              <div class="canvas">
                <svg viewBox="364 161 796 428" role="img" aria-label="矿体">
                  <defs>
                    <linearGradient id="neck" x1="0" y1="0" x2=".15" y2="1">
                      <stop offset="0" stop-color="#c01010" /><stop offset=".15" stop-color="#e92424" />
                      <stop offset=".6" stop-color="#d91a1a" /><stop offset="1" stop-color="#cc1216" />
                    </linearGradient>
                    <linearGradient id="taper" x1="0" y1="0" x2=".25" y2="1">
                      <stop offset=".2" stop-color="#a80505" /><stop offset=".36" stop-color="#d81616" />
                      <stop offset=".5" stop-color="#e01b1b" /><stop offset=".75" stop-color="#d41414" />
                      <stop offset=".95" stop-color="#b40808" />
                    </linearGradient>
                    <linearGradient id="flare" x1="0" y1="0" x2=".15" y2="1">
                      <stop offset=".15" stop-color="#c20000" /><stop offset=".45" stop-color="#ba0404" />
                      <stop offset=".6" stop-color="#c90606" /><stop offset=".85" stop-color="#a80000" /><stop offset="1" stop-color="#860000" />
                    </linearGradient>
                    <linearGradient id="rim" x1="0" y1="0" x2=".1" y2="1">
                      <stop offset="0" stop-color="#9e0808" /><stop offset=".07" stop-color="#ef2828" />
                      <stop offset=".25" stop-color="#e22020" /><stop offset=".45" stop-color="#c81010" />
                      <stop offset=".62" stop-color="#e92525" /><stop offset=".88" stop-color="#cf0f0f" /><stop offset="1" stop-color="#8d0000" />
                    </linearGradient>
                    <linearGradient id="mouth" x1="0" y1="0" x2="0" y2="1">
                      <stop offset="0" stop-color="#7a0000" /><stop offset=".5" stop-color="#5a0000" /><stop offset="1" stop-color="#820000" />
                    </linearGradient>
                  </defs>
                  <path d="M503 376l46-7 8 81-45 8z" fill="url(#neck)" />
                  <path d="M549 369l109-62c1 50 8 98 16 140l-117 3z" fill="url(#taper)" />
                  <path d="M658 307l104-75c-2 80 14 190 31 264l-119-49c-8-42-15-90-16-140z" fill="url(#flare)" />
                  <path d="M762 232l46-8c-1 90 14 185 32 264l-47 8c-17-74-33-184-31-264z" fill="url(#rim)" />
                  <path d="M808 224c25 45 36 150 33 264-17-75-34-175-33-264z" fill="url(#mouth)" />
                  {#each streaks as [x1, y1, x2, y2]}
                    <line {x1} {y1} {x2} {y2} stroke="#7c0000" stroke-opacity=".3" />
                  {/each}
                  <path d="M549 369l8 81M658 307c1 50 8 98 16 140M762 232c-2 80 14 190 31 264" fill="none" stroke="#f08a2c" />
                  <path d="M503 376l9 82M808 224c-1 89 16 189 32 264M808 224c25 45 36 150 33 264" fill="none" stroke="#b0209c" />
                </svg>
              </div>
              <div class="console">
                <div class="conlabel">信息栏</div>
                <div class="conbox">
                  <div class="logrow">
                    <div class="log">{#each log as line}<p>{line}</p>{/each}</div>
                    {@render vscroll("con")}
                  </div>
                  <div class="cmd">
                    <button class="prompt" aria-label="命令历史"><svg viewBox="0 0 24 14"><path d="M.5.5h14v13H.5z" fill="#cdd4de" stroke="#7f8999" /><path d="M3 4l3 3-3 3M7 10.5h5" fill="none" stroke="#333" stroke-width="1.3" /><path d="M18 6h6l-3 3z" fill="#777" /></svg></button>
                    <span class="caret"></span>
                    <input aria-label="命令" bind:value={command} />
                  </div>
                </div>
              </div>
            </div>
          </div>
          <div class="bottom">
            <div class="tabs">
              {#each tabs as name, i}
                <button class="tab" class:current={i === 0}>{name}</button>
              {/each}
              <button class="tab add">+</button>
            </div>
            <div class="status">
              <output>X=2118.789 Y=5177.006 Z=95.370</output>
              {#each modes as m}
                <button class="mode" class:pressed={m.on} onclick={() => (m.on = !m.on)}>{m.name}</button>
              {/each}
            </div>
          </div>
        </div>
        {@render rail()}
      </div>
    </section>

    <section class="notepad" aria-label="记事本">
      <div class="padtitle">
        {@render icon("pad")}
        <h2>按资源类别划分矿体的 思路 - 记事本</h2>
        {@render winButtons()}
      </div>
      <nav class="padmenu">
        {#each padMenus as m}<button>{m}</button>{/each}
      </nav>
      <div class="edit">
        <div class="page">
          <textarea aria-label="文本" spellcheck="false" bind:value={note}></textarea>
          <span class="textcaret"></span>
          <span class="pointer"></span>
        </div>
        {@render vscroll("pad")}
      </div>
      <div class="padfoot">
        {@render hscroll("pad")}
        <svg class="sizer" viewBox="0 0 10 10" aria-hidden="true"><path d="M7 1h2M4 4h2M7 4h2M1 7h2M4 7h2M7 7h2" stroke="#aaa" stroke-width="2" /></svg>
      </div>
    </section>

    <div class="meter"><div></div></div>
  </main>

  <footer class="taskbar">
    {#each apps as a}
      <button class="app" class:open={a.open} class:active={a.active} class:big={a.big} aria-label={a.label}>{@render icon(a.icon)}</button>
    {/each}
    <div class="tray">
      <button aria-label="显示隐藏的图标"><svg viewBox="0 0 16 16"><path d="M2 11l6-6 6 6" /></svg></button>
      <button aria-label="360安全卫士"><svg viewBox="0 0 16 16"><circle cx="8" cy="8" r="8" fill="#e8dc2c" stroke="none" /><path d="M1 11A8 8 0 0 0 15 11" stroke="#53a32c" stroke-width="2" /><path d="M8 4v8M4 8h8" stroke="#237a1f" stroke-width="2.5" /></svg></button>
      <button aria-label="电源"><svg viewBox="0 0 16 16"><path d="M5 5h10v7H5zM1 2v3M4 2v3M0 5h5v2l-2 2v3h2" /><path d="M7 7h6v3H7z" fill="#fff" /></svg></button>
      <button aria-label="网络"><svg viewBox="0 0 16 16"><path d="M5 3h11v8H4V7M10 11v3M6 14h8M.5 1.5h4v4h-4zM2.5 6v8h2" /></svg></button>
      <button aria-label="音量"><svg viewBox="0 0 16 16"><path d="M1 6h2l4-4v12l-4-4H1zM9 6c1 1 1 3 0 4M11 4c2 2 2 6 0 8M13 2c3 3 3 9 0 12" /></svg></button>
      <button class="lang">英</button>
      <button class="ime"><b>五</b></button>
      <time class="clock"><span>12:31</span><span>2020/3/21</span></time>
      <button class="bell" aria-label="通知"><svg viewBox="0 0 16 16"><path d="M.5 1.5h15v11H11l-3 3v-3H.5z" /></svg></button>
      <span class="peek"></span>
    </div>
  </footer>
</div>

<style>
  :global(body) { margin: 0; background: #05101f; }
  .screen { display: flex; flex-direction: column; height: 100vh; min-height: 640px; overflow: hidden;
    font-family: "Noto Sans", "Noto Sans CJK SC", sans-serif; font-size: 12px; line-height: 16px; color: #111; }
  button { font: inherit; color: inherit; background: none; border: 0; padding: 0; margin: 0; }
  h1, h2, p, ul { margin: 0; padding: 0; font-size: inherit; font-weight: 400; list-style: none; }
  svg { display: block; overflow: visible; }
  .ico { width: 16px; height: 16px; flex: none; }

  /* windows */
  .desktop { position: relative; flex: 1; min-height: 0; overflow: hidden;
    background: linear-gradient(90deg, #03142c, #062040 50%, #04264f); }
  .window { position: absolute; left: 1px; top: 1px; bottom: 8px; display: flex; flex-direction: column; background: #6e6e6e; }
  .front { right: 181px; border-right: 1px solid #777; }
  .back { right: 9px; }
  .titlebar { display: flex; align-items: center; height: 30px; flex: none; padding-left: 8px; gap: 5px;
    background: #f7fcf8; color: #8d9490; }
  .titlebar h1 { white-space: nowrap; }
  .winbtns { display: flex; margin-left: auto; }
  .winbtns button { width: 46px; height: 28px; display: flex; align-items: center; justify-content: center; }
  .winbtns svg { width: 11px; height: 11px; fill: none; stroke: currentColor; }
  .menubar { display: flex; align-items: center; height: 24px; flex: none; color: #dfe1df; }
  .menubar .ico { width: 15px; height: 15px; }
  .menus { display: flex; gap: 14px; margin-left: 11px; padding-bottom: 2px; font-size: 13px; white-space: nowrap; }
  .menus small { font-size: 11px; }
  .mdi { display: flex; gap: 6px; margin-left: auto; padding: 4px 4px 0 0; }
  .mdi svg { width: 10px; height: 10px; fill: none; stroke: #d2d4d2; }
  .void { height: 107px; flex: none; }

  /* toolbars */
  .bars { display: flex; flex-direction: column; align-items: flex-start; gap: 1px; flex: none; padding-bottom: 1px; }
  .bar { display: flex; align-items: center; height: 25px; padding-right: 2px; border-radius: 4px 4px 4px 0;
    background: linear-gradient(#b9bbb9, #a9aba9 50%, #8b8d8b); box-shadow: inset 0 -1px #5f615f; }
  .bar.tall { height: 27px; }
  .grip { width: 10px; height: 16px; flex: none;
    background: radial-gradient(circle, #222 1px, transparent 2px) 50% 0 / 4px 4px repeat-y; }
  .bar .grip ~ .grip { width: 12px; }
  .grip.flat { width: 16px; height: 10px;
    background: radial-gradient(circle, #222 1px, transparent 2px) 0 50% / 4px 4px repeat-x; }
  .tool { width: 22px; height: 22px; flex: none; display: flex; align-items: center; justify-content: center; }
  .tool.on { background: #fbdf77; box-shadow: inset 0 0 0 1px #c99a2a; border-radius: 3px; }
  .sep { width: 8px; height: 14px; flex: none; background: linear-gradient(#eee, #eee) 50% / 1px 100% no-repeat; }
  .combos { display: flex; gap: 4px; padding-left: 2px; }
  .combo { position: relative; width: 196px; height: 21px; box-sizing: border-box; border: 1px solid #757875;
    background: linear-gradient(#c6c8c6, #c6c8c6) 100% 0 / 13px 100% no-repeat #ededed; }
  .combo::after { content: ""; position: absolute; right: 4px; top: 8px; pointer-events: none;
    border: 3px solid transparent; border-top: 4px solid #707370; border-bottom: 0; }
  .combo select { appearance: none; width: 100%; height: 100%; border: 0; margin: 0; padding: 0 16px 0 3px; background: none;
    font: 12px/16px "Liberation Sans", sans-serif; color: #111; }
  .combo i { position: absolute; left: 7px; top: 10px; width: 68px; height: 1px; background: #111; }
  .combo.wide { width: 246px; }
  .combo.wide select { padding-left: 89px; }
  .combo.weight i { width: 90px; }
  .combo.weight select { padding-left: 107px; }
  .combo.swatch i { left: 4px; top: 4px; width: 10px; height: 10px; border: 1px solid #111; background: #fff; }
  .combo.swatch select { padding-left: 23px; }

  .frame { display: flex; flex: 1; min-height: 0; }
  .rail { display: flex; flex-direction: column; align-items: center; width: 25px; flex: none; overflow: hidden;
    background: linear-gradient(90deg, #b6b8b6, #a4a6a4 50%, #828582); margin-left: 1px; }
  .rail.right { margin: 0 1px 0 0; }
  .rail.right::before { content: ""; height: 19px; flex: none; }
  .middle { display: flex; flex-direction: column; flex: 1; min-width: 0; background: #6e726e; }
  .work { display: flex; flex: 1; min-height: 0; gap: 4px; }
  .center { display: flex; flex-direction: column; flex: 1; min-width: 0; }

  /* docked panels */
  .dock { display: flex; flex-direction: column; width: 333px; gap: 4px; }
  .panel { display: flex; flex-direction: column; flex: 1 1 0; min-height: 0; background: #eee; }
  .panel:first-child { flex-basis: 4px; }
  .panel-head { display: flex; align-items: center; gap: 8px; height: 20px; flex: none; padding: 0 6px 0 4px;
    background: #777b77; color: #eef0ee; }
  .panel-head h2 { flex: 1; font-size: 13px; }
  .panel-head svg { width: 9px; height: 9px; fill: none; stroke: #fff; }
  .filebox, .filerow { display: flex; flex: 1; min-height: 0; }
  .filebox { flex-direction: column; }
  .tree { flex: 1; min-width: 0; overflow: hidden; padding-left: 5px; }
  .tree li { display: flex; align-items: center; height: 20px; white-space: nowrap; }
  .tree.loose { padding-top: 2px; }
  .tree.loose li { height: 22px; }
  .tree .name { padding-left: 4px; color: #111; }
  .guide { width: 15px; margin-left: 4px; height: 20px; border-left: 1px dotted #777; box-sizing: border-box; }
  .elbow { width: 5px; margin-left: 4px; height: 20px; box-sizing: border-box; border-left: 1px dotted #777;
    background: linear-gradient(90deg, #888 50%, transparent 50%) 0 50% / 2px 1px repeat-x; }
  .box { width: 9px; height: 9px; box-sizing: border-box; border: 1px solid #777; background: #fff;
    font: 9px/7px "Liberation Mono", monospace; text-align: center; }
  .dots { width: 6px; height: 1px; background: linear-gradient(90deg, #888 50%, transparent 50%) 0 0 / 2px 1px repeat-x; }
  .dots.long { width: 15px; margin-right: 1px; }

  /* scrollbars */
  .vscroll, .hscroll { display: flex; flex: none; background: #eee; color: #555; }
  .vscroll { flex-direction: column; width: 16px; }
  .hscroll { height: 17px; }
  .vscroll button, .hscroll button { width: 16px; height: 17px; display: flex; align-items: center; justify-content: center; flex: none; }
  .chev { width: 8px; height: 8px; }
  .track { flex: 1; display: flex; min-width: 0; min-height: 0; }
  .thumb { background: #c9cac8; }
  .vscroll .thumb { width: 100%; }
  .files { margin-right: 2px; }
  .vscroll.files .thumb { height: 46%; }
  .hscroll.files .thumb { width: 50%; }
  .hscroll.files { padding-left: 2px; margin-right: 16px; }
  .vscroll.con .track { align-items: flex-end; }
  .vscroll.con .thumb { height: 40%; }
  .vscroll.pad { color: #bbb; }
  .vscroll.pad .thumb { display: none; }
  .hscroll.pad { flex: 1; height: 15px; }
  .hscroll.pad .thumb { width: 95%; }

  /* model view and command line */
  .canvas { flex: 1; min-height: 0; background: #f7fcf8; }
  .canvas svg { width: 100%; height: 100%; overflow: hidden; }
  .console { display: flex; flex: none; height: 106px; padding-top: 5px; }
  .conlabel { width: 17px; box-sizing: border-box; padding-top: 8px; writing-mode: vertical-rl; text-orientation: sideways; color: #e6e8e6; }
  .conbox { flex: 1; min-width: 0; display: flex; flex-direction: column; border-left: 1px solid #999; background: #cfcfcf; }
  .logrow { display: flex; flex: 1; min-height: 0; padding-right: 2px; }
  .log { flex: 1; padding: 1px 1px 0; font-family: "Inter", "Noto Sans CJK SC", sans-serif; white-space: pre; overflow: hidden; }
  .cmd { display: flex; align-items: center; gap: 6px; height: 28px; padding-left: 4px; background: #f7fcf8; border: 1px solid #8c8f8c; flex: none; margin-right: 2px; }
  .prompt svg { width: 24px; height: 14px; }
  .caret { width: 1px; height: 15px; background: #000; }
  .cmd input { flex: 1; min-width: 0; border: 0; background: none; outline: 0; font: inherit; }

  .bottom { display: flex; height: 20px; flex: none; background: #a9aba9; }
  .tabs { display: flex; width: 308px; flex: none; padding-left: 5px; box-sizing: border-box; }
  .tab { width: 76px; height: 20px; font-size: 13px; line-height: 14px; padding-bottom: 6px; background: #dcdedb;
    clip-path: polygon(1% 0, 99% 0, 94% 20%, 88% 100%, 14% 100%, 7% 20%); }
  .tab.current { width: 60px; background: #f7fcf8; }
  .tab.add { width: 25px; height: 16px; margin-top: 4px; padding: 0; font-size: 16px; color: #444;
    clip-path: polygon(20% 0, 100% 0, 85% 100%, 0 100%); }
  .status { display: flex; align-items: center; flex: 1; height: 20px; gap: 6px; min-width: 0; background: #dfe1de; padding-left: 12px; overflow: hidden; }
  .back .status { flex: none; }
  .status output { width: 202px; flex: none; white-space: nowrap; font-size: 11px; }
  .mode { width: 40px; height: 18px; flex: none; font-size: 14px; line-height: 16px; box-sizing: border-box;
    border: 1px solid; border-color: #eef0ee #999 #999 #eef0ee; white-space: nowrap; }
  .mode.pressed { border-color: #222 #f5f5f5 #f5f5f5 #222; }

  /* notepad */
  .notepad { position: absolute; right: 17px; top: 81px; width: 398px; height: 518px; box-sizing: border-box;
    display: flex; flex-direction: column; border: 1px solid #1f76b3; background: #f7fcf8; }
  .padtitle { display: flex; align-items: center; gap: 5px; height: 29px; flex: none; padding-left: 7px; color: #111; white-space: nowrap; }
  .padmenu { display: flex; gap: 15px; height: 21px; flex: none; padding-left: 6px; }
  .edit { display: flex; flex: 1; min-height: 0; border: 1px solid #1f76b3; border-bottom: 0; }
  .page { position: relative; flex: 1; min-width: 0; }
  textarea { display: block; width: 100%; height: 100%; box-sizing: border-box; border: 0; padding: 3px 0 0 1px; margin: 0;
    resize: none; outline: 0; overflow: hidden; background: none; color: #111; white-space: pre;
    font: 16px/16px "Liberation Serif", "Noto Sans CJK SC", serif; }
  .textcaret { position: absolute; left: 121px; top: 83px; width: 1px; height: 15px; background: #111; }
  .pointer { position: absolute; left: 107px; top: 59px; width: 29px; height: 29px; border-radius: 50%; background: #2c8a2f99; }
  .padfoot { display: flex; height: 17px; flex: none; background: #eee; margin: 0 1px; }
  .padfoot .hscroll { height: 16px; }
  .sizer { width: 12px; height: 12px; margin: 4px 2px 0; }

  .meter { position: absolute; right: 2px; top: 333px; width: 8px; height: 57px; border: 1px solid #8c959c; border-radius: 4px;
    background: #06121d; display: flex; align-items: flex-end; }
  .meter div { width: 100%; height: 20px; background: repeating-linear-gradient(#59b765 0 2px, #0b2d14 2px 3px); }

  /* taskbar */
  .taskbar { display: flex; height: 40px; flex: none; background: #020405; color: #fff; }
  .app { position: relative; width: 49px; height: 40px; display: flex; align-items: center; justify-content: center; }
  .app.big .ico { width: 23px; height: 23px; }
  .app.open { box-shadow: inset 0 -3px #76b9ed; width: 41px; margin: 0 4px; }
  .app.active { background: #35393b; width: 48px; margin: 0; }
  .tray { display: flex; align-items: center; margin-left: auto; }
  .tray button { width: 24px; height: 40px; display: flex; align-items: center; justify-content: center; }
  .tray svg { width: 15px; height: 15px; fill: none; stroke: #fff; stroke-width: 1.2; }
  .tray .lang { font-size: 14px; }
  .tray .ime { width: 34px; }
  .ime b { width: 15px; height: 15px; line-height: 15px; background: #fff; color: #000; font-size: 13px; }
  .clock { display: flex; flex-direction: column; align-items: center; width: 76px; line-height: 19px; }
  .tray .bell { width: 38px; }
  .peek { width: 5px; height: 40px; margin-left: 9px; border-left: 1px solid #555; }
</style>
